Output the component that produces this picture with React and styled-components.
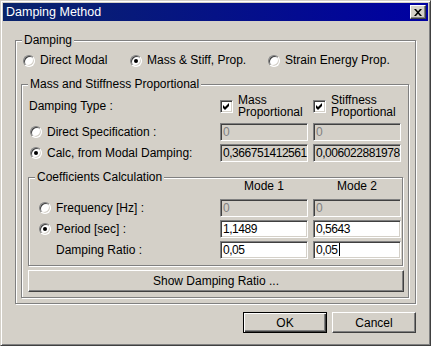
import React from 'react';
import styled, { createGlobalStyle, css } from 'styled-components';

const GlobalStyle = createGlobalStyle`
  html, body {
    margin: 0;
    padding: 0;
    background: #d4d0c8;
  }
  body {
    font-family: "Liberation Sans", Arial, sans-serif;
    font-size: 12px;
    color: #000;
  }
`;

const Window = styled.div`
  box-sizing: border-box;
  width: 431px;
  height: 346px;
  background: #d4d0c8;
  border: 1px solid;
  border-color: #d4d0c8 #404040 #404040 #d4d0c8;
  box-shadow: inset 1px 1px 0 #fff, inset -1px -1px 0 #808080;
  padding: 2px;
  display: flex;
  flex-direction: column;
`;

const TitleBar = styled.div`
  height: 18px;
  flex: none;
  display: flex;
  align-items: center;
  justify-content: space-between;
  padding: 0 2px 0 3px;
  background: linear-gradient(to right, #0a246a, #0000a2);
  color: #fff;
  font-size: 12.5px;
`;

const CloseButton = styled.div`
  box-sizing: border-box;
  width: 16px;
  height: 14px;
  background: #d4d0c8;
  border: 1px solid;
  border-color: #fff #404040 #404040 #fff;
  box-shadow: inset -1px -1px 0 #808080;
  display: flex;
  align-items: center;
  justify-content: center;
  padding-right: 1px;
  svg { display: block; }
`;

const Body = styled.div`
  flex: 1;
  display: flex;
  flex-direction: column;
  padding: 19px 12px 0 12px;
`;

const Group = styled.div`
  position: relative;
  box-sizing: border-box;
  border: 1px solid #808080;
  box-shadow: inset 1px 1px 0 #fff, 1px 1px 0 #fff;
  width: ${p => p.$width}px;
  padding: ${p => p.$pad};
`;

const Legend = styled.span`
  position: absolute;
  top: -8px;
  left: 6px;
  padding: 0 2px;
  line-height: 14px;
  background: #d4d0c8;
  white-space: nowrap;
`;

const RadioRow = styled.div`
  display: flex;
  align-items: center;
  height: 13px;
  margin-bottom: 17px;
`;

const Option = styled.label`
  display: flex;
  align-items: center;
  gap: 5px;
  white-space: nowrap;
  width: ${p => (p.$width ? `${p.$width}px` : 'auto')};
  line-height: 13px;
`;

const RadioDot = styled.span`
  box-sizing: border-box;
  flex: none;
  width: 12px;
  height: 12px;
  border-radius: 50%;
  background: #fff;
  border: 1px solid;
  border-color: #808080 #fff #fff #808080;
  box-shadow: inset 1px 1px 0 #404040, inset -1px -1px 0 #d4d0c8;
  display: flex;
  align-items: center;
  justify-content: center;
  &::after {
    content: '';
    width: 4px;
    height: 4px;
    border-radius: 50%;
    background: ${p => (p.$checked ? '#000' : 'transparent')};
  }
`;

const CheckBox = styled.span`
  box-sizing: border-box;
  flex: none;
  width: 13px;
  height: 13px;
  background: #fff;
  border: 1px solid;
  border-color: #808080 #fff #fff #808080;
  box-shadow: inset 1px 1px 0 #404040, inset -1px -1px 0 #d4d0c8;
  display: flex;
  align-items: center;
  justify-content: center;
  svg { display: block; }
`;

const CheckOption = styled.label`
  display: flex;
  align-items: center;
  gap: 5px;
`;

const CheckText = styled.span`
  display: flex;
  flex-direction: column;
  line-height: 12px;
`;

const Row = styled.div`
  display: grid;
  grid-template-columns: ${p => p.$label}px 88px 88px;
  column-gap: 5px;
  align-items: center;
  height: ${p => p.$height || 18}px;
  margin-top: ${p => p.$gap || 0}px;
`;

const Cell = styled.div`
  display: flex;
  align-items: center;
  gap: 5px;
  padding-left: ${p => p.$indent || 0}px;
  white-space: nowrap;
`;

const ModeLabel = styled.div`
  text-align: center;
`;

const Field = styled.div`
  box-sizing: border-box;
  height: 18px;
  border: 1px solid;
  border-color: #808080 #fff #fff #808080;
  box-shadow: inset 1px 1px 0 #404040, inset -1px -1px 0 #d4d0c8;
  background: ${p => (p.$editable ? '#fff' : '#d4d0c8')};
  color: ${p => (p.$disabled ? '#808080' : '#000')};
  padding-left: 2px;
  line-height: 16px;
  font-size: 12px;
  letter-spacing: -0.45px;
  white-space: nowrap;
  overflow: hidden;
`;

const Caret = styled.span`
  display: inline-block;
  width: 1px;
  height: 13px;
  margin-left: 1px;
  background: #000;
  vertical-align: -2px;
`;

const Button = styled.button`
  box-sizing: border-box;
  font: inherit;
  color: #000;
  background: #d4d0c8;
  padding: 0;
  border: 1px solid;
  border-color: #fff #404040 #404040 #fff;
  box-shadow: inset -1px -1px 0 #808080;
  width: ${p => (p.$width ? `${p.$width}px` : '100%')};
  height: ${p => p.$height}px;
  ${p =>
    p.$default &&
    css`
      border-color: #000;
      box-shadow: inset 1px 1px 0 #fff, inset -1px -1px 0 #404040, inset -2px -2px 0 #808080;
    `}
`;

const Footer = styled.div`
  display: flex;
  justify-content: flex-end;
  gap: 5px;
  margin-top: 8px;
`;

const Radio = ({ checked, label, width }) => (
  <Option $width={width}>
    <RadioDot $checked={checked} />
    {label}
  </Option>
);

const Check = ({ lines }) => (
  <CheckOption>
    <CheckBox>
      <svg width="7" height="7" viewBox="0 0 7 7">
        <polygon points="0,2 2,4 6,0 6,3 2,7 0,5" fill="#000" />
      </svg>
    </CheckBox>
    <CheckText>
      {lines.map(l => (
        <span key={l}>{l}</span>
      ))}
    </CheckText>
  </CheckOption>
);

export default function App() {
  return (
    <>
      <GlobalStyle />
      <Window>
        <TitleBar>
          <span>Damping Method</span>
          <CloseButton>
            <svg width="8" height="7" viewBox="0 0 8 7">
              <path d="M0 0h2l2 2.3L6 0h2L5 3.5 8 7H6L4 4.7 2 7H0l3-3.5z" fill="#000" />
            </svg>
          </CloseButton>
        </TitleBar>

        <Body>
          <Group $width={401} $pad="13px 0 5px 7px">
            <Legend>Damping</Legend>
            <RadioRow>
              <Radio label="Direct Modal" width={107} />
              <Radio label="Mass & Stiff, Prop." width={138} checked />
              <Radio label="Strain Energy Prop." />
            </RadioRow>

            <Group $width={388} $pad="9px 4px 5px 6px" style={{ marginLeft: -2 }}>
              <Legend>Mass and Stiffness Proportional</Legend>
              <Row $label={187} $height={24}>
                <Cell $indent={1}>Damping Type :</Cell>
                <Check lines={['Mass', 'Proportional']} />
                <Check lines={['Stiffness', 'Proportional']} />
              </Row>
              <Row $label={187} $gap={5}>
                <Cell $indent={2}>
                  <RadioDot />
                  Direct Specification :
                </Cell>
                <Field $disabled>0</Field>
                <Field $disabled>0</Field>
              </Row>
              <Row $label={187} $gap={3}>
                <Cell $indent={2}>
                  <RadioDot $checked />
                  Calc, from Modal Damping:
                </Cell>
                <Field>0,366751412561</Field>
                <Field>0,006022881978</Field>
              </Row>

              <Group $width={375} $pad="1px 0 6px 0" style={{ marginTop: 15 }}>
                <Legend>Coefficients Calculation</Legend>
                <Row $label={186} $height={14}>
                  <span />
                  <ModeLabel>Mode 1</ModeLabel>
                  <ModeLabel>Mode 2</ModeLabel>
                </Row>
                <Row $label={186} $gap={6}>
                  <Cell $indent={10}>
                    <RadioDot />
                    Frequency [Hz] :
                  </Cell>
                  <Field $disabled>0</Field>
                  <Field $disabled>0</Field>
                </Row>
                <Row $label={186} $gap={3}>
                  <Cell $indent={10}>
                    <RadioDot $checked />
                    Period [sec] :
                  </Cell>
                  <Field $editable>1,1489</Field>
                  <Field $editable>0,5643</Field>
                </Row>
                <Row $label={186} $gap={3}>
                  <Cell $indent={27}>Damping Ratio :</Cell>
                  <Field $editable>0,05</Field>
                  <Field $editable>0,05<Caret /></Field>
                </Row>
              </Group>

              <div style={{ marginTop: 4 }}>
                <Button $height={22}>Show Damping Ratio ...</Button>
              </div>
            </Group>
          </Group>

          <Footer>
            <Button $default $width={84} $height={21}>OK</Button>
            <Button $width={84} $height={21}>Cancel</Button>
          </Footer>
        </Body>
      </Window>
    </>
  );
}
